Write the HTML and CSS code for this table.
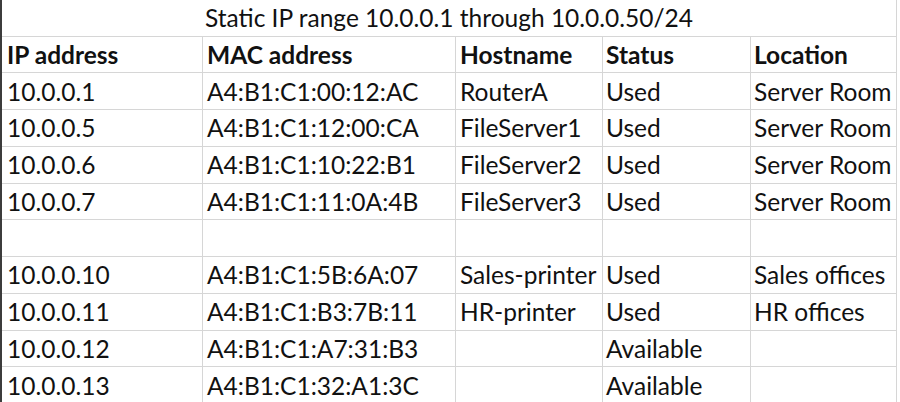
FILE: index.html
```html
<!DOCTYPE html>
<html>
<head>
<meta charset="utf-8">
<link rel="stylesheet" href="styles.css">
</head>
<body>
<div class="sheet">
  <div class="title">Static IP range 10.0.0.1 through 10.0.0.50/24</div>
  <div class="row head">
    <div class="cell">IP address</div><div class="cell">MAC address</div><div class="cell">Hostname</div><div class="cell">Status</div><div class="cell">Location</div>
  </div>
  <div class="row">
    <div class="cell">10.0.0.1</div><div class="cell">A4:B1:C1:00:12:AC</div><div class="cell">RouterA</div><div class="cell">Used</div><div class="cell">Server Room</div>
  </div>
  <div class="row">
    <div class="cell">10.0.0.5</div><div class="cell">A4:B1:C1:12:00:CA</div><div class="cell">FileServer1</div><div class="cell">Used</div><div class="cell">Server Room</div>
  </div>
  <div class="row">
    <div class="cell">10.0.0.6</div><div class="cell">A4:B1:C1:10:22:B1</div><div class="cell">FileServer2</div><div class="cell">Used</div><div class="cell">Server Room</div>
  </div>
  <div class="row">
    <div class="cell">10.0.0.7</div><div class="cell">A4:B1:C1:11:0A:4B</div><div class="cell">FileServer3</div><div class="cell">Used</div><div class="cell">Server Room</div>
  </div>
  <div class="row">
    <div class="cell"></div><div class="cell"></div><div class="cell"></div><div class="cell"></div><div class="cell"></div>
  </div>
  <div class="row">
    <div class="cell">10.0.0.10</div><div class="cell">A4:B1:C1:5B:6A:07</div><div class="cell">Sales-printer</div><div class="cell">Used</div><div class="cell">Sales offices</div>
  </div>
  <div class="row">
    <div class="cell">10.0.0.11</div><div class="cell">A4:B1:C1:B3:7B:11</div><div class="cell">HR-printer</div><div class="cell">Used</div><div class="cell">HR offices</div>
  </div>
  <div class="row">
    <div class="cell">10.0.0.12</div><div class="cell">A4:B1:C1:A7:31:B3</div><div class="cell"></div><div class="cell">Available</div><div class="cell"></div>
  </div>
  <div class="row">
    <div class="cell">10.0.0.13</div><div class="cell">A4:B1:C1:32:A1:3C</div><div class="cell"></div><div class="cell">Available</div><div class="cell"></div>
  </div>
</div>
</body>
</html>
```
FILE: styles.css
```css
html, body {
  margin: 0;
  padding: 0;
  background: #ffffff;
  overflow: hidden;
}
.sheet {
  width: 897px;
  box-sizing: border-box;
  border-left: 2px solid #3c3c3c;
  font-family: Lato, "Liberation Sans", sans-serif;
  font-size: 24.5px;
  color: #111111;
  line-height: 1;
}
.title {
  height: 36.5px;
  box-sizing: border-box;
  border-bottom: 1px solid #d6d6d6;
  border-right: 1px solid #d6d6d6;
  display: flex;
  align-items: flex-end;
  justify-content: center;
  padding-bottom: 5px;
}
.row {
  display: grid;
  grid-template-columns: 201px 253px 147px 148px 146px;
  height: 36.78px;
}
.cell {
  box-sizing: border-box;
  border-right: 1px solid #d6d6d6;
  border-bottom: 1px solid #d6d6d6;
  display: flex;
  align-items: flex-end;
  padding: 0 0 5px 4px;
  white-space: nowrap;
  overflow: visible;
}
.row .cell:first-child {
  padding-left: 5px;
}
.row .cell:nth-child(4),
.row .cell:last-child {
  padding-left: 3px;
}
.head .cell {
  font-weight: bold;
}
```
